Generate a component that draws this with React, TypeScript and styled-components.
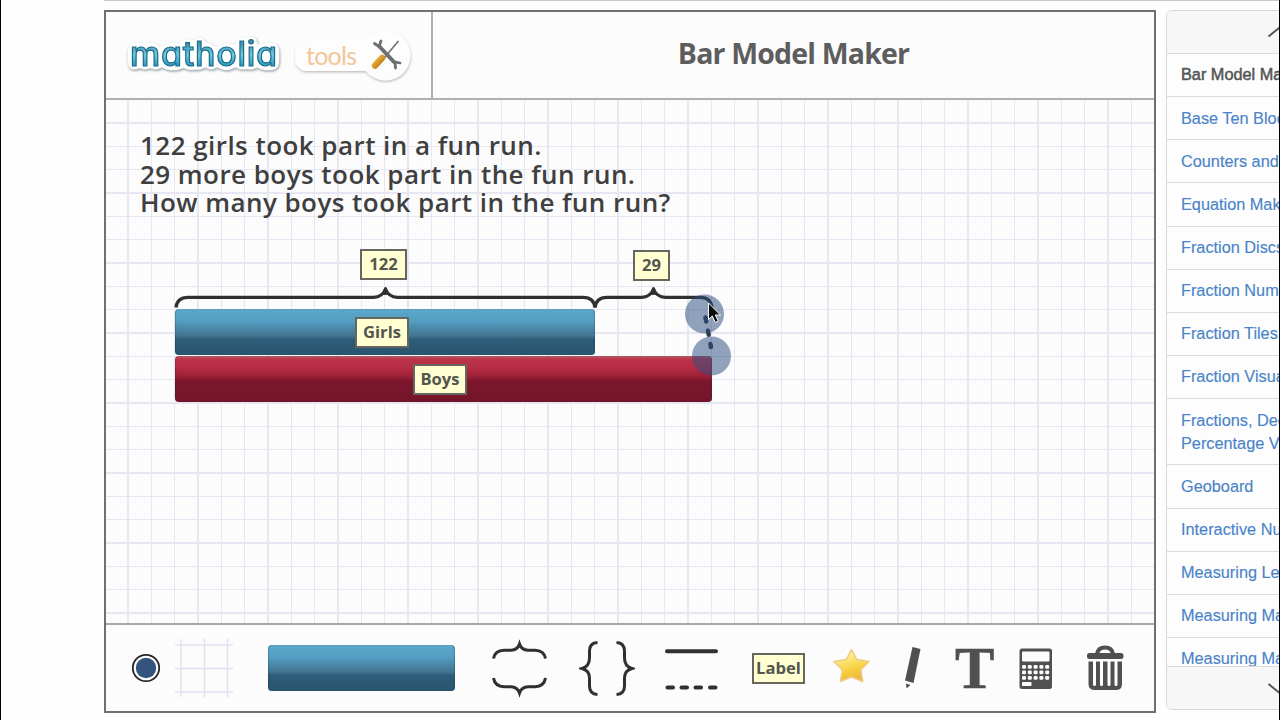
import React from 'react';
import styled, { createGlobalStyle } from 'styled-components';

const GlobalStyle = createGlobalStyle`
  * { box-sizing: border-box; }
  body { margin: 0; background: #fff; }
`;

const humanist = `'Open Sans', 'Noto Sans', sans-serif`;

const Page = styled.div`
  width: 1280px;
  height: 720px;
  overflow: hidden;
  background: #fefefe;
  border-left: 1px solid #000;
  border-right: 1px solid #000;
  padding-left: 103px;
`;

const TopRule = styled.div`
  height: 1px;
  width: 1176px;
  background: #c8c8c8;
`;

const Columns = styled.div`
  display: flex;
  align-items: flex-start;
  gap: 10px;
  padding-top: 9px;
  width: 1320px;
`;

const Tool = styled.main`
  width: 1052px;
  height: 703px;
  flex: none;
  display: flex;
  flex-direction: column;
  border: 2px solid #707070;
  background: #fcfcfc;
`;

const Header = styled.header`
  height: 88px;
  flex: none;
  display: flex;
  border-bottom: 2px solid #b0b0b0;
`;

const Brand = styled.div`
  width: 327px;
  flex: none;
  border-right: 2px solid #b0b0b0;
`;

const Title = styled.h1`
  flex: 1;
  margin: 0;
  padding: 0 0 3px 0;
  display: flex;
  align-items: center;
  justify-content: center;
  font: 700 28.5px/1 ${humanist};
  letter-spacing: -0.83px;
  color: #5d5d5d;
`;

const Canvas = styled.section`
  position: relative;
  flex: 1;
  background-color: #fcfcfd;
  background-image:
    repeating-linear-gradient(90deg, #e7e7f3 0 1.5px, transparent 1.5px 23.333px),
    repeating-linear-gradient(180deg, #e7e7f3 0 1.5px, transparent 1.5px 23.333px);
  background-position: -2px 0, 0 -1px;
  background-size: 1100px 100%, 100% 600px;
`;

const Problem = styled.div`
  position: absolute;
  left: 34px;
  top: 31px;
  font: 600 26px/28.7px ${humanist};
  letter-spacing: 0.45px;
  color: #3f3f3f;
  white-space: nowrap;
`;

const blueFill = `linear-gradient(#5fa9c8 0, #5aa6c9 2px, #539fc3 12px, #47819f 22px, #427591 27px, #2d5d78 30px, #2a556e 100%)`;
const redFill = `linear-gradient(#b4606d 0, #bd3349 3px, #b52c43 12px, #9c2138 20px, #7b172d 25px, #74142b 100%)`;

const Bar = styled.div<{ $tone: 'blue' | 'red' }>`
  height: 46px;
  border-radius: 4px;
  background: ${(p) => (p.$tone === 'blue' ? blueFill : redFill)};
  box-shadow: inset 1px 0 1px rgba(20, 40, 60, 0.25), inset -1px 0 1px rgba(20, 40, 60, 0.25);
`;

const PlacedBar = styled(Bar)<{ $x: number; $y: number; $w: number }>`
  position: absolute;
  left: ${(p) => p.$x}px;
  top: ${(p) => p.$y}px;
  width: ${(p) => p.$w}px;
`;

const Tag = styled.div<{ $w: number }>`
  width: ${(p) => p.$w}px;
  height: 31px;
  flex: none;
  display: flex;
  align-items: center;
  justify-content: center;
  border: 2px solid #66665e;
  background: #ffffd2;
  font: 700 16.6px/1 ${humanist};
  color: #55554f;
  white-space: nowrap;
`;

const PlacedTag = styled(Tag)<{ $x: number; $y: number }>`
  position: absolute;
  left: ${(p) => p.$x}px;
  top: ${(p) => p.$y}px;
`;

const Overlay = styled.svg`
  position: absolute;
  left: 0;
  top: 0;
  pointer-events: none;
`;

const Toolbar = styled.footer`
  height: 88px;
  flex: none;
  display: flex;
  align-items: center;
  border-top: 2px solid #a8a8a8;
`;

const Slot = styled.div<{ $gap: number }>`
  flex: none;
  display: flex;
  align-items: center;
  justify-content: center;
  height: 60px;
  margin-left: ${(p) => p.$gap}px;
  svg { display: block; }
`;

const Swatch = styled(Bar)`
  width: 187px;
`;

const BigT = styled.span`
  width: 39px;
  text-align: center;
  font: 700 59px/60px 'Liberation Serif', serif;
  -webkit-text-stroke: 0.6px #505050;
  color: #505050;
`;

const Sidebar = styled.nav`
  width: 240px;
  height: 700px;
  flex: none;
  display: flex;
  flex-direction: column;
  border: 1px solid #d8d8d8;
  border-radius: 6px;
  background: #fdfdfe;
  overflow: hidden;
  font: 16.3px/23.2px 'Liberation Sans', Arial, sans-serif;
`;

const Scroll = styled.div<{ $end?: boolean }>`
  height: 43px;
  flex: none;
  background: #f7f7f7;
  border-${(p) => (p.$end ? 'top' : 'bottom')}: 1px solid #dcdcdc;
  svg { display: block; }
`;

const List = styled.div`
  flex: 1;
  min-height: 0;
  overflow: hidden;
`;

const Item = styled.div<{ $active?: boolean }>`
  padding: 9.4px 0 9.55px 14px;
  border-bottom: 1px solid #dcdcdc;
  color: ${(p) => (p.$active ? '#555' : '#4a84c8')};
  -webkit-text-stroke: ${(p) => (p.$active ? '0.5px #555' : '0.15px #4a84c8')};
  white-space: pre-line;
`;

const LogoArt = styled.svg`
  display: block;
`;

const LogoWord = styled.text`
  font-family: Inter, sans-serif;
  font-weight: 500;
  font-size: 34px;
  font-feature-settings: 'cv11';
`;

const tools = [
  'Bar Model Maker',
  'Base Ten Blocks',
  'Counters and Dice',
  'Equation Maker',
  'Fraction Discs',
  'Fraction Number Line',
  'Fraction Tiles',
  'Fraction Visualiser',
  'Fractions, Decimals and\nPercentage Visualiser',
  'Geoboard',
  'Interactive Number Line',
  'Measuring Length',
  'Measuring Mass',
  'Measuring Mass Scale',
];

const Logo = () => (
  <LogoArt width="325" height="86" viewBox="0 0 325 86">
    <defs>
      <linearGradient id="logoFill" x1="0" y1="0" x2="0" y2="1">
        <stop offset="0.25" stopColor="#3f93b0" />
        <stop offset="0.55" stopColor="#6ecbe2" />
        <stop offset="0.8" stopColor="#2c9cc4" />
      </linearGradient>
      <linearGradient id="handle" x1="0" y1="0" x2="1" y2="1">
        <stop offset="0" stopColor="#f6bd45" />
        <stop offset="1" stopColor="#b87413" />
      </linearGradient>
      <filter id="sticker" filterUnits="userSpaceOnUse" x="5" y="5" width="185" height="75" colorInterpolationFilters="sRGB">
        <feGaussianBlur in="SourceAlpha" stdDeviation="3" />
        <feComponentTransfer result="shape">
          <feFuncR type="linear" slope="0" intercept="1" />
          <feFuncG type="linear" slope="0" intercept="1" />
          <feFuncB type="linear" slope="0" intercept="1" />
          <feFuncA type="linear" slope="14" intercept="-0.9" />
        </feComponentTransfer>
        <feDropShadow dx="0.6" dy="1.2" stdDeviation="0.9" floodColor="#4b5b65" floodOpacity="0.65" result="base" />
        <feMerge>
          <feMergeNode in="base" />
          <feMergeNode in="SourceGraphic" />
        </feMerge>
      </filter>
      <filter id="faint" x="-10%" y="-20%" width="120%" height="150%">
        <feDropShadow dx="0.5" dy="1.4" stdDeviation="1" floodColor="#666" floodOpacity="0.42" />
      </filter>
    </defs>
    <LogoWord x="24" y="53.500" textLength="147" fill="url(#logoFill)" stroke="#1f6c88" strokeWidth="1.200" filter="url(#sticker)">matholia</LogoWord>
    <g filter="url(#faint)" fill="#fdfdfd">
      <rect x="189" y="28" width="90" height="31" rx="12" />
      <circle cx="279.500" cy="43.500" r="25" />
    </g>
    <text x="200" y="52.500" textLength="51" fontFamily="Lato, sans-serif" fontWeight="400" fontSize="25" fill="#f2c699">tools</text>
    <g strokeLinecap="round">
      <path d="M292 29.500L279 45" stroke="#777" strokeWidth="1.800" />
      <path d="M276 46L269 53.500" stroke="url(#handle)" strokeWidth="6.500" />
      <path d="M273 34L288 50" stroke="#6c6f72" strokeWidth="4" />
      <path d="M268.500 31.500L273 34.500L275 29M294 51L289 50L289.500 56" fill="none" stroke="#6c6f72" strokeWidth="2.800" />
    </g>
  </LogoArt>
);

const Brace = ({ x1, x2 }: { x1: number; x2: number }) => {
  const m = (x1 + x2) / 2;
  return (
    <g fill="none" stroke="#303030" strokeWidth="3.300" strokeLinejoin="round">
      <path
        d={`M${x1} 207.500Q${x1 + 1} 197.500 ${x1 + 12} 197.300H${m - 12}Q${m - 3} 197 ${m} 189Q${m + 3} 197 ${m + 12} 197.300H${x2 - 12}Q${x2 - 1} 197.500 ${x2} 207.500`}
      />
      <path d={`M${m - 3} 194.500L${m} 187L${m + 3} 194.500Z`} fill="#303030" strokeWidth="0.800" />
    </g>
  );
};

export default function App() {
  return (
    <>
      <GlobalStyle />
      <Page>
        <TopRule />
        <Columns>
          <Tool>
            <Header>
              <Brand>
                <Logo />
              </Brand>
              <Title>Bar Model Maker</Title>
            </Header>
            <Canvas>
              <Problem>
                122 girls took part in a fun run.
                <br />
                29 more boys took part in the fun run.
                <br />
                How many boys took part in the fun run?
              </Problem>
              <PlacedBar $tone="blue" $x={69} $y={209} $w={420} />
              <PlacedBar $tone="red" $x={69} $y={256} $w={537} />
              <PlacedTag $x={254} $y={149} $w={47}>122</PlacedTag>
              <PlacedTag $x={527} $y={150} $w={37}>29</PlacedTag>
              <PlacedTag $x={249} $y={216.5} $w={54}>Girls</PlacedTag>
              <PlacedTag $x={307} $y={263.5} $w={54}>Boys</PlacedTag>
              <Overlay width="1048" height="524" viewBox="0 0 1048 524">
                <Brace x1={70} x2={489} />
                <Brace x1={489} x2={606} />
                <path d="M599.500 217.500L605 247" stroke="#303a48" strokeWidth="4.500" strokeLinecap="round" strokeDasharray="4 9.500" />
                <circle cx="598.500" cy="214" r="19.500" fill="#2f4f80" fillOpacity="0.53" />
                <circle cx="605.500" cy="256" r="19.500" fill="#2f4f80" fillOpacity="0.53" />
                <path d="M602.500 203V219.500L606.300 216L609.300 222.500L612.300 221L609.300 215H614.500Z" fill="#0c0c0c" stroke="#fff" strokeWidth="1" />
              </Overlay>
            </Canvas>
            <Toolbar>
              <Slot $gap={25}>
                <svg width="30" height="30" viewBox="0 0 30 30">
                  <circle cx="15" cy="15" r="13.200" fill="#fff" stroke="#252525" strokeWidth="1.800" />
                  <circle cx="15" cy="15" r="10.200" fill="#33547f" />
                </svg>
              </Slot>
              <Slot $gap={14}>
                <svg width="58" height="60" viewBox="0 0 58 60">
                  <path d="M6 1V59M29.500 1V59M52.500 1V59M0 7H58M0 30.500H58M0 54H58" stroke="#dfe2f1" strokeWidth="1.500" />
                </svg>
              </Slot>
              <Slot $gap={35}>
                <Swatch $tone="blue" />
              </Slot>
              <Slot $gap={37}>
                <svg width="55" height="60" viewBox="0 0 55 60" fill="none" stroke="#303030" strokeWidth="3">
                  <path d="M1.500 20.500Q3 12.500 12 12.300H19Q25.500 12 27.500 6Q29.500 12 36 12.300H43Q52 12.500 53.500 20.500" />
                  <path d="M1.500 40Q3 48.500 12 48.700H19Q25.500 49 27.500 55Q29.500 49 36 48.700H43Q52 48.500 53.500 40" />
                </svg>
              </Slot>
              <Slot $gap={32}>
                <svg width="56" height="60" viewBox="0 0 56 60" fill="none" stroke="#303030" strokeWidth="3">
                  <path d="M18.500 4.500Q10.500 5 10.500 13V20Q10.500 28.500 3 30.500Q10.500 32.500 10.500 40V48Q10.500 56 18.500 56.500" />
                  <path d="M37.500 4.500Q45.500 5 45.500 13V20Q45.500 28.500 53 30.500Q45.500 32.500 45.500 40V48Q45.500 56 37.500 56.500" />
                </svg>
              </Slot>
              <Slot $gap={29}>
                <svg width="55" height="60" viewBox="0 0 55 60" stroke="#303030" strokeWidth="4" strokeLinecap="round">
                  <path d="M3 13.300H52M3.500 49.500H9M17.500 49.500H23M31.500 49.500H37M46 49.500H51.500" />
                </svg>
              </Slot>
              <Slot $gap={33}>
                <Tag $w={53}>Label</Tag>
              </Slot>
              <Slot $gap={27}>
                <svg width="39" height="60" viewBox="0 0 39 60">
                  <defs>
                    <linearGradient id="star" x1="0" y1="0" x2="0.300" y2="1">
                      <stop offset="0.1" stopColor="#fdf3b0" />
                      <stop offset="0.45" stopColor="#fae26a" />
                      <stop offset="0.75" stopColor="#f7cd3a" />
                      <stop offset="1" stopColor="#efb83e" />
                    </linearGradient>
                  </defs>
                  <path d="M19.500 11.500L24.800 21.500L37 23.500L28.700 32L30.700 43.500L19.500 39L8.500 43.500L10.300 32L2 23.500L14.200 21.500Z" fill="url(#star)" stroke="#ebcd85" strokeWidth="1.600" strokeLinejoin="round" />
                </svg>
              </Slot>
              <Slot $gap={33}>
                <svg width="18" height="60" viewBox="0 0 18 60" fill="#505050">
                  <path d="M8.500 9L16.500 11L9.500 45L1 42.500Z" />
                  <path d="M2 45.500L6.500 47L2.500 50.500Z" />
                </svg>
              </Slot>
              <Slot $gap={33}>
                <BigT>T</BigT>
              </Slot>
              <Slot $gap={25}>
                <svg width="34" height="60" viewBox="0 0 34 60">
                  <rect x="0.500" y="10.500" width="32.500" height="40.500" rx="2.500" fill="#505050" />
                  <rect x="3" y="13.500" width="27.500" height="10" rx="1" fill="#fdfdfd" />
                  <g fill="#fdfdfd">
                    {[0, 1, 2].map((r) =>
                      [0, 1, 2, 3, 4].map((c) => (
                        <rect key={`${r}-${c}`} x={3 + c * 5.8} y={27 + r * 5.5} width="4" height="3.800" rx="1.200" />
                      ))
                    )}
                    <rect x="3" y="44" width="9.500" height="4" rx="0.800" />
                  </g>
                </svg>
              </Slot>
              <Slot $gap={33}>
                <svg width="38" height="60" viewBox="0 0 38 60">
                  <path d="M11 16Q12 9.500 19 9.500T27 16" fill="none" stroke="#505050" strokeWidth="4" />
                  <rect x="1" y="15" width="36.500" height="6" rx="2.500" fill="#505050" />
                  <path d="M2.500 23.500H36V46Q36 52 30 52H9Q2.500 52 2.500 46Z" fill="#505050" />
                  <path d="M8.500 23.500V46.500M15.500 23.500V46.500M23 23.500V46.500M30 23.500V46.500" stroke="#fdfdfd" strokeWidth="3" strokeLinecap="round" />
                </svg>
              </Slot>
            </Toolbar>
          </Tool>
          <Sidebar>
            <Scroll>
              <svg width="238" height="42" viewBox="0 0 238 42">
                <path d="M101.500 25.500L117 13L132.500 25.500" fill="none" stroke="#555" strokeWidth="2" />
              </svg>
            </Scroll>
            <List>
              {tools.map((name, i) => (
                <Item key={name} $active={i === 0}>{name}</Item>
              ))}
            </List>
            <Scroll $end>
              <svg width="238" height="42" viewBox="0 0 238 42">
                <path d="M101.500 17L117 29.500L132.500 17" fill="none" stroke="#555" strokeWidth="2" />
              </svg>
            </Scroll>
          </Sidebar>
        </Columns>
      </Page>
    </>
  );
}
